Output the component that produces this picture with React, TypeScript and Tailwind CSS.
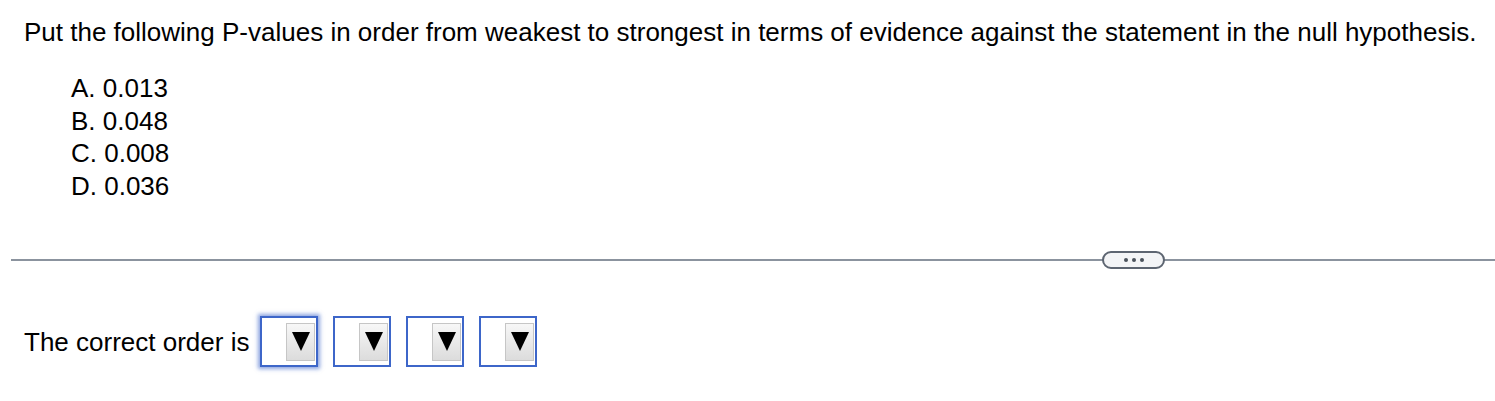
import React from 'react';

const options = ['A. 0.013', 'B. 0.048', 'C. 0.008', 'D. 0.036'];

function Dropdown({ focused }: { focused?: boolean }) {
  return (
    <div
      className={
        'flex h-[51px] w-[58px] items-center justify-end border-2 border-[#3d66c9] bg-white pr-[1px] ' +
        (focused ? 'shadow-[0_0_4px_2px_rgba(61,102,201,0.6)]' : '')
      }
    >
      <div className="flex h-[38px] w-[29px] items-center justify-center border border-[#c6c6c6] bg-gradient-to-b from-[#f7f7f7] to-[#dcdcdc]">
        <svg width="18" height="19" viewBox="0 0 18 19">
          <polygon points="0,0 18,0 9,19" fill="#000" />
        </svg>
      </div>
    </div>
  );
}

export default function App() {
  return (
    <div className="min-h-[401px] w-[1495px] bg-white font-['Liberation_Sans',Arial,sans-serif] text-[26px] text-black">
      <p className="pl-6 pt-[16px] leading-[32px]">
        Put the following P-values in order from weakest to strongest in terms of evidence against the statement in the null hypothesis.
      </p>

      <ul className="mt-[24px] pl-[71px] leading-[32.5px]">
        {options.map(o => (
          <li key={o}>{o}</li>
        ))}
      </ul>

      {/* divider with the collapse pill */}
      <div className="relative ml-[11px] mt-[57px] h-[2px] bg-[#8b939e]">
        <div className="absolute left-[1091px] top-[-8px] flex h-[18px] w-[63px] items-center justify-center gap-[4px] rounded-full border-2 border-[#5d6571] bg-[#f3f4f6]">
          <span className="h-[4px] w-[4px] rounded-full bg-[#4b525c]" />
          <span className="h-[4px] w-[4px] rounded-full bg-[#4b525c]" />
          <span className="h-[4px] w-[4px] rounded-full bg-[#4b525c]" />
        </div>
      </div>

      <div className="mt-[55px] flex items-center pl-6">
        <span className="mr-[11px] leading-[32px]">The correct order is</span>
        <div className="flex gap-[15px]">
          <Dropdown focused />
          <Dropdown />
          <Dropdown />
          <Dropdown />
        </div>
      </div>
    </div>
  );
}
